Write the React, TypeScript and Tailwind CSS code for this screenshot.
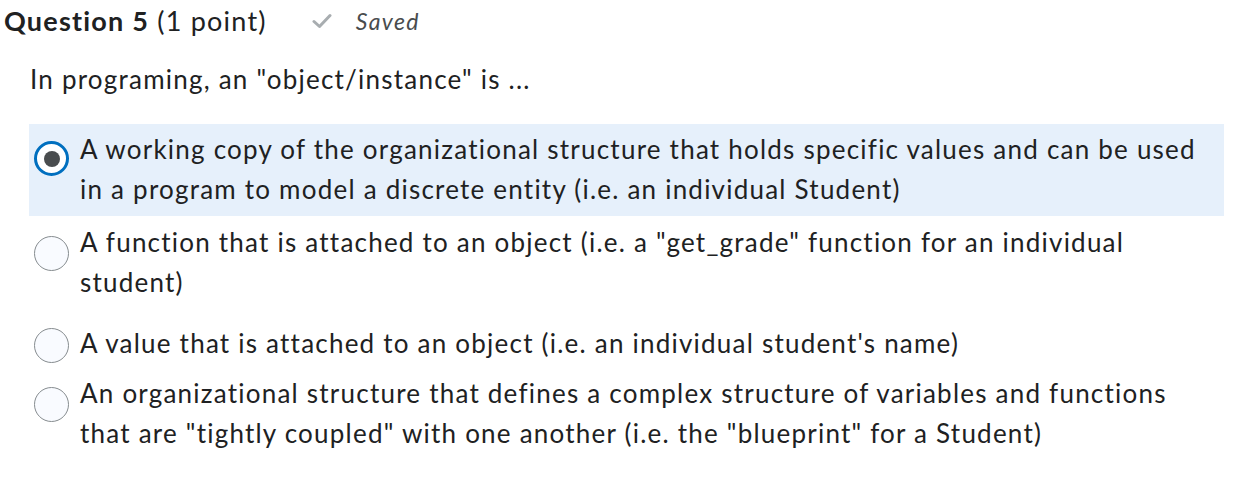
import React from 'react';

const options = [
  {
    id: 1,
    text: 'A working copy of the organizational structure that holds specific values and can be used in a program to model a discrete entity (i.e. an individual Student)',
    checked: true,
    spacing: 'mt-[25px]',
    textPad: 'pt-0',
  },
  {
    id: 2,
    text: 'A function that is attached to an object (i.e. a "get_grade" function for an individual student)',
    checked: false,
    spacing: 'mt-[1px]',
    textPad: 'pt-0',
  },
  {
    id: 3,
    text: "A value that is attached to an object (i.e. an individual student's name)",
    checked: false,
    spacing: 'mt-0',
    textPad: 'pt-[9px]',
  },
  {
    id: 4,
    text: 'An organizational structure that defines a complex structure of variables and functions that are "tightly coupled" with one another (i.e. the "blueprint" for a Student)',
    checked: false,
    spacing: 'mt-[-2px]',
    textPad: 'pt-0',
  },
];

const Radio: React.FC<{ checked: boolean }> = ({ checked }) =>
  checked ? (
    <div className="w-[35px] h-[35px] rounded-full border-[3px] border-[#006fbf] bg-white flex items-center justify-center flex-shrink-0 mt-[12px]">
      <div className="w-[16px] h-[16px] rounded-full bg-[#494c4e]" />
    </div>
  ) : (
    <div className="w-[35px] h-[35px] rounded-full border border-[#868c8f] bg-[#f9fbff] flex-shrink-0 mt-[14px]" />
  );

const App: React.FC = () => {
  return (
    <div className="w-[1257px] h-[478px] bg-white text-[#202122] font-['Lato','Liberation_Sans',sans-serif] [font-variant-ligatures:none]">
      {/* Header */}
      <div className="flex items-center pl-[4px] pt-[2px] h-[40px]">
        <h2 className="text-[27px] leading-[40px] tracking-[0.045em]">
          <span className="font-bold">Question 5</span> (1 point)
        </h2>
        <svg className="ml-[45px] w-[20px] h-[16px]" viewBox="0 0 20 16" fill="none">
          <path d="M2 8.5 L7.5 13.5 L18 2.5" stroke="#a8adb0" strokeWidth="3" strokeLinecap="round" strokeLinejoin="round" />
        </svg>
        <span className="ml-[24px] italic text-[23px] tracking-[0.06em] text-[#494c4e]">Saved</span>
      </div>

      {/* Question text */}
      <p className="pl-[30px] mt-[19px] text-[26px] leading-[40px] tracking-[0.047em]">
        In programing, an "object/instance" is ...
      </p>

      {/* Options */}
      <div className="pl-[29px] w-[1224px]">
        {options.map(opt => (
          <div
            key={opt.id}
            className={`flex gap-[11px] pl-[5px] pr-[20px] pt-[5px] pb-[7px] ${opt.spacing} ${opt.checked ? 'bg-[#e6f0fb]' : ''}`}
          >
            <Radio checked={opt.checked} />
            <span className={`text-[26px] leading-[40px] tracking-[0.047em] ${opt.textPad}`}>{opt.text}</span>
          </div>
        ))}
      </div>
    </div>
  );
};

export default App;
